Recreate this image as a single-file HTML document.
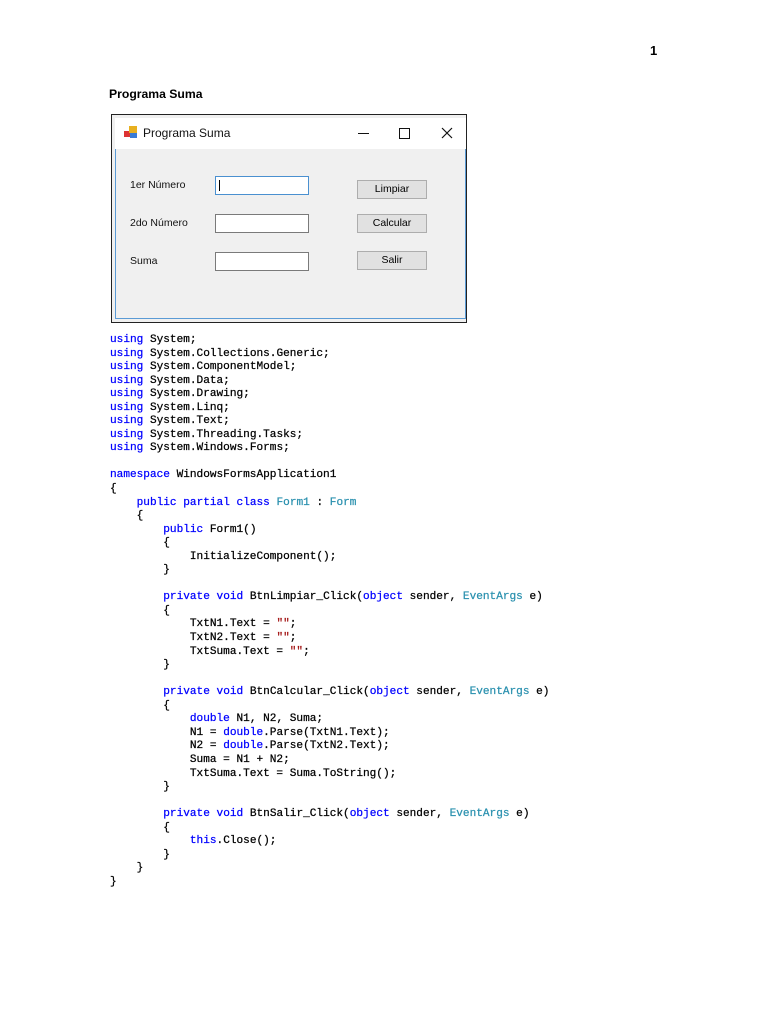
<!DOCTYPE html>
<html><head><meta charset="utf-8"><style>
body{margin:0;background:#fff;width:768px;height:1024px;position:relative;overflow:hidden;font-family:"Liberation Sans",sans-serif}
.pn{position:absolute;left:650px;top:43px;font-size:13px;font-weight:bold}
.h{position:absolute;left:109px;top:87px;font-size:12.2px;font-weight:bold}
.win{position:absolute;left:111px;top:114px;width:354px;height:207px;border:1px solid #222;background:#f0f0f0}
.inner{position:absolute;left:3px;top:3px;right:0;bottom:3px;border:1px solid #5b9bd5;border-top:none;background:#f0f0f0}
.tb{position:absolute;left:3px;right:0;top:3px;height:31px;background:#fff}
.t{position:absolute;font-size:10.5px;color:#111}
.tx{position:absolute;left:103px;width:92px;height:17px;background:#fff;border:1px solid #7a7a7a}
.bt{position:absolute;left:245px;width:68px;height:17px;background:#e1e1e1;border:1px solid #adadad;font-size:10.5px;text-align:center;line-height:17px}
pre{position:absolute;left:110px;top:334px;margin:0;font-family:"Liberation Mono",monospace;font-size:11.1px;line-height:13.55px;color:#000;-webkit-text-stroke:0.25px #000}
.k{color:#0000ff;-webkit-text-stroke-color:#0000ff}.c{color:#2b91af;-webkit-text-stroke-color:#2b91af}.s{color:#a31515;-webkit-text-stroke-color:#a31515}
</style></head><body>
<div class="pn">1</div>
<div class="h">Programa Suma</div>
<div class="win">
<div class="inner"></div>
<div class="tb">
<svg style="position:absolute;left:9px;top:8px" width="14" height="13"><rect x="0" y="5" width="6" height="6" fill="#d33"/><rect x="5" y="0" width="8" height="7" fill="#e8b020"/><rect x="6" y="7" width="7" height="5" fill="#3a7bd5"/></svg>
<div class="t" style="left:28px;top:8px;font-size:12px">Programa Suma</div>
<div style="position:absolute;left:243px;top:15px;width:11px;height:1px;background:#111"></div>
<div style="position:absolute;left:284px;top:10px;width:9px;height:9px;border:1px solid #111"></div>
<svg style="position:absolute;left:326px;top:9px" width="12" height="12"><path d="M1 1L11 11M11 1L1 11" stroke="#111" stroke-width="1.2"/></svg>
</div>
<div class="t" style="left:18px;top:64px">1er Número</div>
<div class="t" style="left:18px;top:102px">2do Número</div>
<div class="t" style="left:18px;top:140px">Suma</div>
<div class="tx" style="top:61px;border-color:#4a90d0"><div style="position:absolute;left:3px;top:3px;width:1px;height:11px;background:#000"></div></div>
<div class="tx" style="top:99px"></div>
<div class="tx" style="top:137px"></div>
<div class="bt" style="top:65px">Limpiar</div>
<div class="bt" style="top:99px">Calcular</div>
<div class="bt" style="top:136px">Salir</div>
</div>
<pre><span class="k">using</span> System;
<span class="k">using</span> System.Collections.Generic;
<span class="k">using</span> System.ComponentModel;
<span class="k">using</span> System.Data;
<span class="k">using</span> System.Drawing;
<span class="k">using</span> System.Linq;
<span class="k">using</span> System.Text;
<span class="k">using</span> System.Threading.Tasks;
<span class="k">using</span> System.Windows.Forms;

<span class="k">namespace</span> WindowsFormsApplication1
{
    <span class="k">public</span> <span class="k">partial</span> <span class="k">class</span> <span class="c">Form1</span> : <span class="c">Form</span>
    {
        <span class="k">public</span> Form1()
        {
            InitializeComponent();
        }

        <span class="k">private</span> <span class="k">void</span> BtnLimpiar_Click(<span class="k">object</span> sender, <span class="c">EventArgs</span> e)
        {
            TxtN1.Text = <span class="s">""</span>;
            TxtN2.Text = <span class="s">""</span>;
            TxtSuma.Text = <span class="s">""</span>;
        }

        <span class="k">private</span> <span class="k">void</span> BtnCalcular_Click(<span class="k">object</span> sender, <span class="c">EventArgs</span> e)
        {
            <span class="k">double</span> N1, N2, Suma;
            N1 = <span class="k">double</span>.Parse(TxtN1.Text);
            N2 = <span class="k">double</span>.Parse(TxtN2.Text);
            Suma = N1 + N2;
            TxtSuma.Text = Suma.ToString();
        }

        <span class="k">private</span> <span class="k">void</span> BtnSalir_Click(<span class="k">object</span> sender, <span class="c">EventArgs</span> e)
        {
            <span class="k">this</span>.Close();
        }
    }
}</pre>
</body></html>
